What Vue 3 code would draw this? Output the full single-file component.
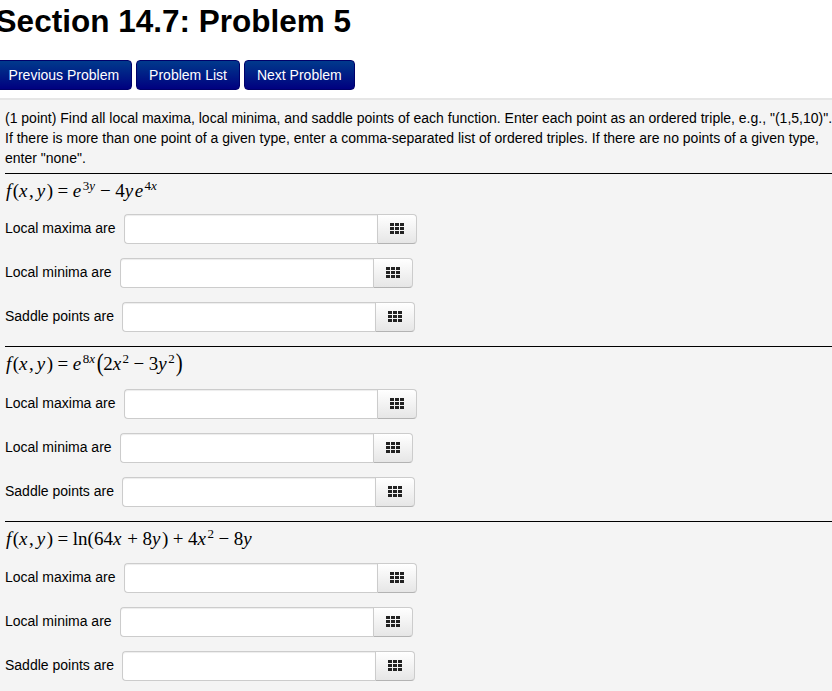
<template>
  <div class="page">
    <header class="page-head">
      <h1 class="title">Section 14.7: Problem 5</h1>
      <nav class="nav">
        <a class="nav-btn" v-for="link in links" :key="link">{{ link }}</a>
      </nav>
    </header>

    <main class="problem">
      <p class="intro">
        (1 point) Find all local maxima, local minima, and saddle points of each function. Enter each point as an ordered triple, e.g., "(1,5,10)". If there is more than one point of a given type, enter a comma-separated list of ordered triples. If there are no points of a given type, enter "none".
      </p>

      <section class="part">
        <div class="math math-a">
          <i>f</i>(<i>x</i>,<span class="thin"></span><i>y</i>)<span class="op">=</span><i>e</i><sup>3<i>y</i></sup><span class="op">−</span>4<i>y</i><i>e</i><sup>4<i>x</i></sup>
        </div>
        <div class="answer" v-for="label in labels" :key="label">
          <label class="answer-label">{{ label }}</label>
          <input class="answer-input" type="text" />
          <button class="grid-btn" type="button">
            <svg width="14" height="11" viewBox="0 0 14 11">
              <rect v-for="cell in cells" :key="cell.id" :x="cell.x" :y="cell.y" width="4" height="3" />
            </svg>
          </button>
        </div>
      </section>

      <section class="part">
        <div class="math math-b">
          <i>f</i>(<i>x</i>,<span class="thin"></span><i>y</i>)<span class="op">=</span><i>e</i><sup>8<i>x</i></sup><span class="paren">(</span>2<i>x</i><sup>2</sup><span class="op">−</span>3<i>y</i><sup>2</sup><span class="paren">)</span>
        </div>
        <div class="answer" v-for="label in labels" :key="label">
          <label class="answer-label">{{ label }}</label>
          <input class="answer-input" type="text" />
          <button class="grid-btn" type="button">
            <svg width="14" height="11" viewBox="0 0 14 11">
              <rect v-for="cell in cells" :key="cell.id" :x="cell.x" :y="cell.y" width="4" height="3" />
            </svg>
          </button>
        </div>
      </section>

      <section class="part">
        <div class="math math-c">
          <i>f</i>(<i>x</i>,<span class="thin"></span><i>y</i>)<span class="op">=</span>ln(64<i>x</i><span class="op">+</span>8<i>y</i>)<span class="op">+</span>4<i>x</i><sup>2</sup><span class="op">−</span>8<i>y</i>
        </div>
        <div class="answer" v-for="label in labels" :key="label">
          <label class="answer-label">{{ label }}</label>
          <input class="answer-input" type="text" />
          <button class="grid-btn" type="button">
            <svg width="14" height="11" viewBox="0 0 14 11">
              <rect v-for="cell in cells" :key="cell.id" :x="cell.x" :y="cell.y" width="4" height="3" />
            </svg>
          </button>
        </div>
      </section>
    </main>
  </div>
</template>

<script setup>
const links = ['Previous Problem', 'Problem List', 'Next Problem']
const labels = ['Local maxima are', 'Local minima are', 'Saddle points are']

// 3x3 icon on the answer buttons
const cells = []
for (let row = 0; row < 3; row++) {
  for (let col = 0; col < 3; col++) {
    cells.push({ id: row + '-' + col, x: col * 5, y: row * 4 })
  }
}
</script>

<style scoped>
.page {
  font-family: "Liberation Sans", Arial, sans-serif;
  font-size: 14px;
  color: #000;
  width: 832px;
  height: 691px;
  overflow: hidden;
}
.page-head {
  margin-left: -4.4px;
  height: 98px;
  box-sizing: border-box;
  padding-top: 1px;
}
.title {
  margin: 0;
  font-size: 31.5px;
  line-height: 40px;
  font-weight: 700;
}
.nav {
  display: flex;
  gap: 4px;
  margin-top: 19px;
}
.nav-btn {
  box-sizing: border-box;
  height: 30px;
  line-height: 28px;
  padding: 0 12px;
  color: #fff;
  background: linear-gradient(#003a8c, #000080);
  border: 1px solid #00006a;
  border-radius: 4px;
}
.problem {
  background: #f4f4f4;
  border-top: 2px solid #e6e6e6;
  padding: 8px 0 0 5px;
  height: 600px;
}
.intro {
  margin: 0 -4px 0 0;
  line-height: 20px;
}
.part {
  border-top: 1px solid #000;
  margin-top: 5px;
  padding-bottom: 9px;
}
.math {
  font-family: "Liberation Serif", "DejaVu Serif", serif;
  font-size: 19px;
  line-height: 24px;
  color: #000;
  padding: 5px 0 0 1px;
}
.math i {
  margin-right: 1.5px;
}
.math sup {
  font-size: 13px;
  line-height: 0;
}
.math sup i {
  margin-right: 0.5px;
}
.thin {
  display: inline-block;
  width: 3px;
}
.op {
  margin: 0 4.5px;
}
.paren {
  display: inline-block;
  font-size: 26px;
  line-height: 0;
  margin: 0 -1px 0 0;
  transform: translateY(1px) scaleX(0.8);
}
.math-a { margin-bottom: 11px; }
.math-b { margin-bottom: 13px; }
.math-c { margin-bottom: 12px; }
.answer {
  display: flex;
  align-items: center;
  height: 30px;
  margin-bottom: 14px;
}
.answer:last-child {
  margin-bottom: 0;
}
.answer-label {
  margin: 0 8px 2px 0;
  white-space: nowrap;
}
.answer-input {
  box-sizing: border-box;
  width: 253px;
  height: 30px;
  padding: 4px 6px;
  background: #fff;
  border: 1px solid #ccc;
  border-right: 0;
  border-radius: 4px 0 0 4px;
  box-shadow: inset 0 1px 1px rgba(0, 0, 0, 0.075);
  outline: none;
}
.grid-btn {
  box-sizing: border-box;
  width: 40px;
  height: 30px;
  padding: 0 0 2px;
  display: flex;
  align-items: center;
  justify-content: center;
  background: linear-gradient(#fff, #e6e6e6);
  border: 1px solid #ccc;
  border-bottom-color: #b3b3b3;
  border-radius: 0 4px 4px 0;
}
.grid-btn svg {
  fill: #222;
}
</style>

<style>
html, body {
  margin: 0;
  background: #fff;
  overflow: hidden;
}
</style>
